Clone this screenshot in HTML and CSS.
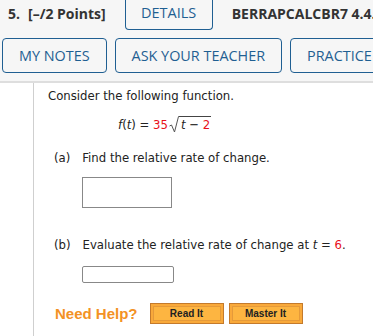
FILE: index.html
```html
<!DOCTYPE html>
<html lang="en">
<head>
  <meta charset="UTF-8">
  <title>Question 5</title>
  <link rel="stylesheet" href="styles.css">
</head>
<body>
  <div class="header">
    <div class="top-row">
      <span class="num">5.</span>
      <span class="points">[&ndash;/2 Points]</span>
      <span class="tab-btn">DETAILS</span>
      <span class="code">BERRAPCALCBR7 4.4.023.</span>
    </div>
    <div class="btn-row">
      <span class="btn">MY NOTES</span>
      <span class="btn">ASK YOUR TEACHER</span>
      <span class="btn">PRACTICE ANOTHER</span>
    </div>
  </div>

  <div class="question">
    <p class="intro">Consider the following function.</p>
    <p class="formula">
      <i>f</i>(<i>t</i>) = <span class="red">35</span><span class="sqrt"><svg width="10" height="17" viewBox="0 0 10 17"><path d="M0.5 10 L2.5 9 L5.5 16 L9.5 0.5 L10 0.5" fill="none" stroke="#555" stroke-width="1"/></svg><span class="radicand"><i>t</i> &minus; <span class="red">2</span></span></span>
    </p>

    <div class="part">
      <span class="label">(a)</span>
      <span>Find the relative rate of change.</span>
    </div>
    <div class="answer big"></div>

    <div class="part part-b">
      <span class="label">(b)</span>
      <span>Evaluate the relative rate of change at <i>t</i> = <span class="red">6</span>.</span>
    </div>
    <div class="answer small"></div>

    <div class="help">
      <span class="need">Need Help?</span>
      <span class="help-btn"><span class="face">Read It</span></span>
      <span class="help-btn"><span class="face">Master It</span></span>
    </div>
  </div>
</body>
</html>
```

FILE: styles.css
```css
body {
  margin: 0;
  background-color: #fff;
  overflow: hidden;
}

.header {
  background-color: #f6f6f6;
  border-bottom: 2px solid #dedede;
  font-family: "Open Sans", sans-serif;
  height: 81px;
  overflow: hidden;
}

.top-row {
  display: flex;
  align-items: flex-start;
  white-space: nowrap;
  height: 30px;
  font-size: 14px;
  font-weight: bold;
  color: #333;
}

.num {
  margin-left: 8px;
  padding-top: 4px;
}

.points {
  margin-left: 8px;
  padding-top: 4px;
}

.tab-btn {
  flex: none;
  margin-left: 19px;
  width: 86px;
  height: 29px;
  line-height: 26px;
  text-align: center;
  border: 1px solid #1f5f92;
  border-top: none;
  border-radius: 0 0 4px 4px;
  color: #1f5f92;
  font-size: 14.5px;
  font-weight: normal;
}

.code {
  margin-left: 19px;
  padding-top: 4px;
}

.btn-row {
  display: flex;
  gap: 8px;
  margin-top: 8px;
  margin-left: 2px;
  white-space: nowrap;
}

.btn {
  flex: none;
  height: 33px;
  line-height: 33px;
  padding: 0 16px;
  border: 1px solid #1f5f92;
  border-radius: 4px;
  color: #1f5f92;
  font-size: 14.4px;
}

.question {
  margin-left: 33px;
  border-left: 1px solid #cfcfcf;
  padding-left: 14px;
  height: 260px;
  font-family: "DejaVu Sans Condensed", "DejaVu Sans", sans-serif;
  font-size: 13px;
  color: #222;
}

.question p {
  margin: 0;
}

.intro {
  padding-top: 5px;
}

.formula {
  padding-top: 13px;
  padding-left: 70px;
}

.red {
  color: #e8101a;
}

.sqrt {
  display: inline-flex;
  align-items: flex-start;
  vertical-align: -4px;
  margin-left: 1px;
}

.radicand {
  border-top: 1px solid #444;
  line-height: 15px;
  padding: 0 1px 0 2px;
}

.part {
  display: flex;
  gap: 12px;
  margin-top: 17px;
  margin-left: 6px;
}

.part-b {
  margin-top: 29px;
}

.answer {
  margin-left: 34px;
  margin-top: 12px;
  border: 1px solid #888;
}

.big {
  width: 88px;
  height: 29px;
}

.small {
  width: 90px;
  height: 15px;
  margin-top: 14px;
  border-radius: 2px;
}

.help {
  display: flex;
  align-items: center;
  gap: 5px;
  margin-top: 20px;
  margin-left: 7px;
  font-family: "Liberation Sans", Arial, sans-serif;
  font-weight: bold;
}

.need {
  font-size: 15px;
  color: #f39224;
  margin-right: 7px;
}

.help-btn {
  padding: 2px;
  background-color: #f9a93a;
  border: 1px solid #c47a2c;
}

.face {
  display: block;
  width: 66px;
  height: 13px;
  line-height: 13px;
  text-align: center;
  background-color: #fdb541;
  border: 1px solid #e59a3a;
  font-size: 10px;
  color: #222;
}
```
